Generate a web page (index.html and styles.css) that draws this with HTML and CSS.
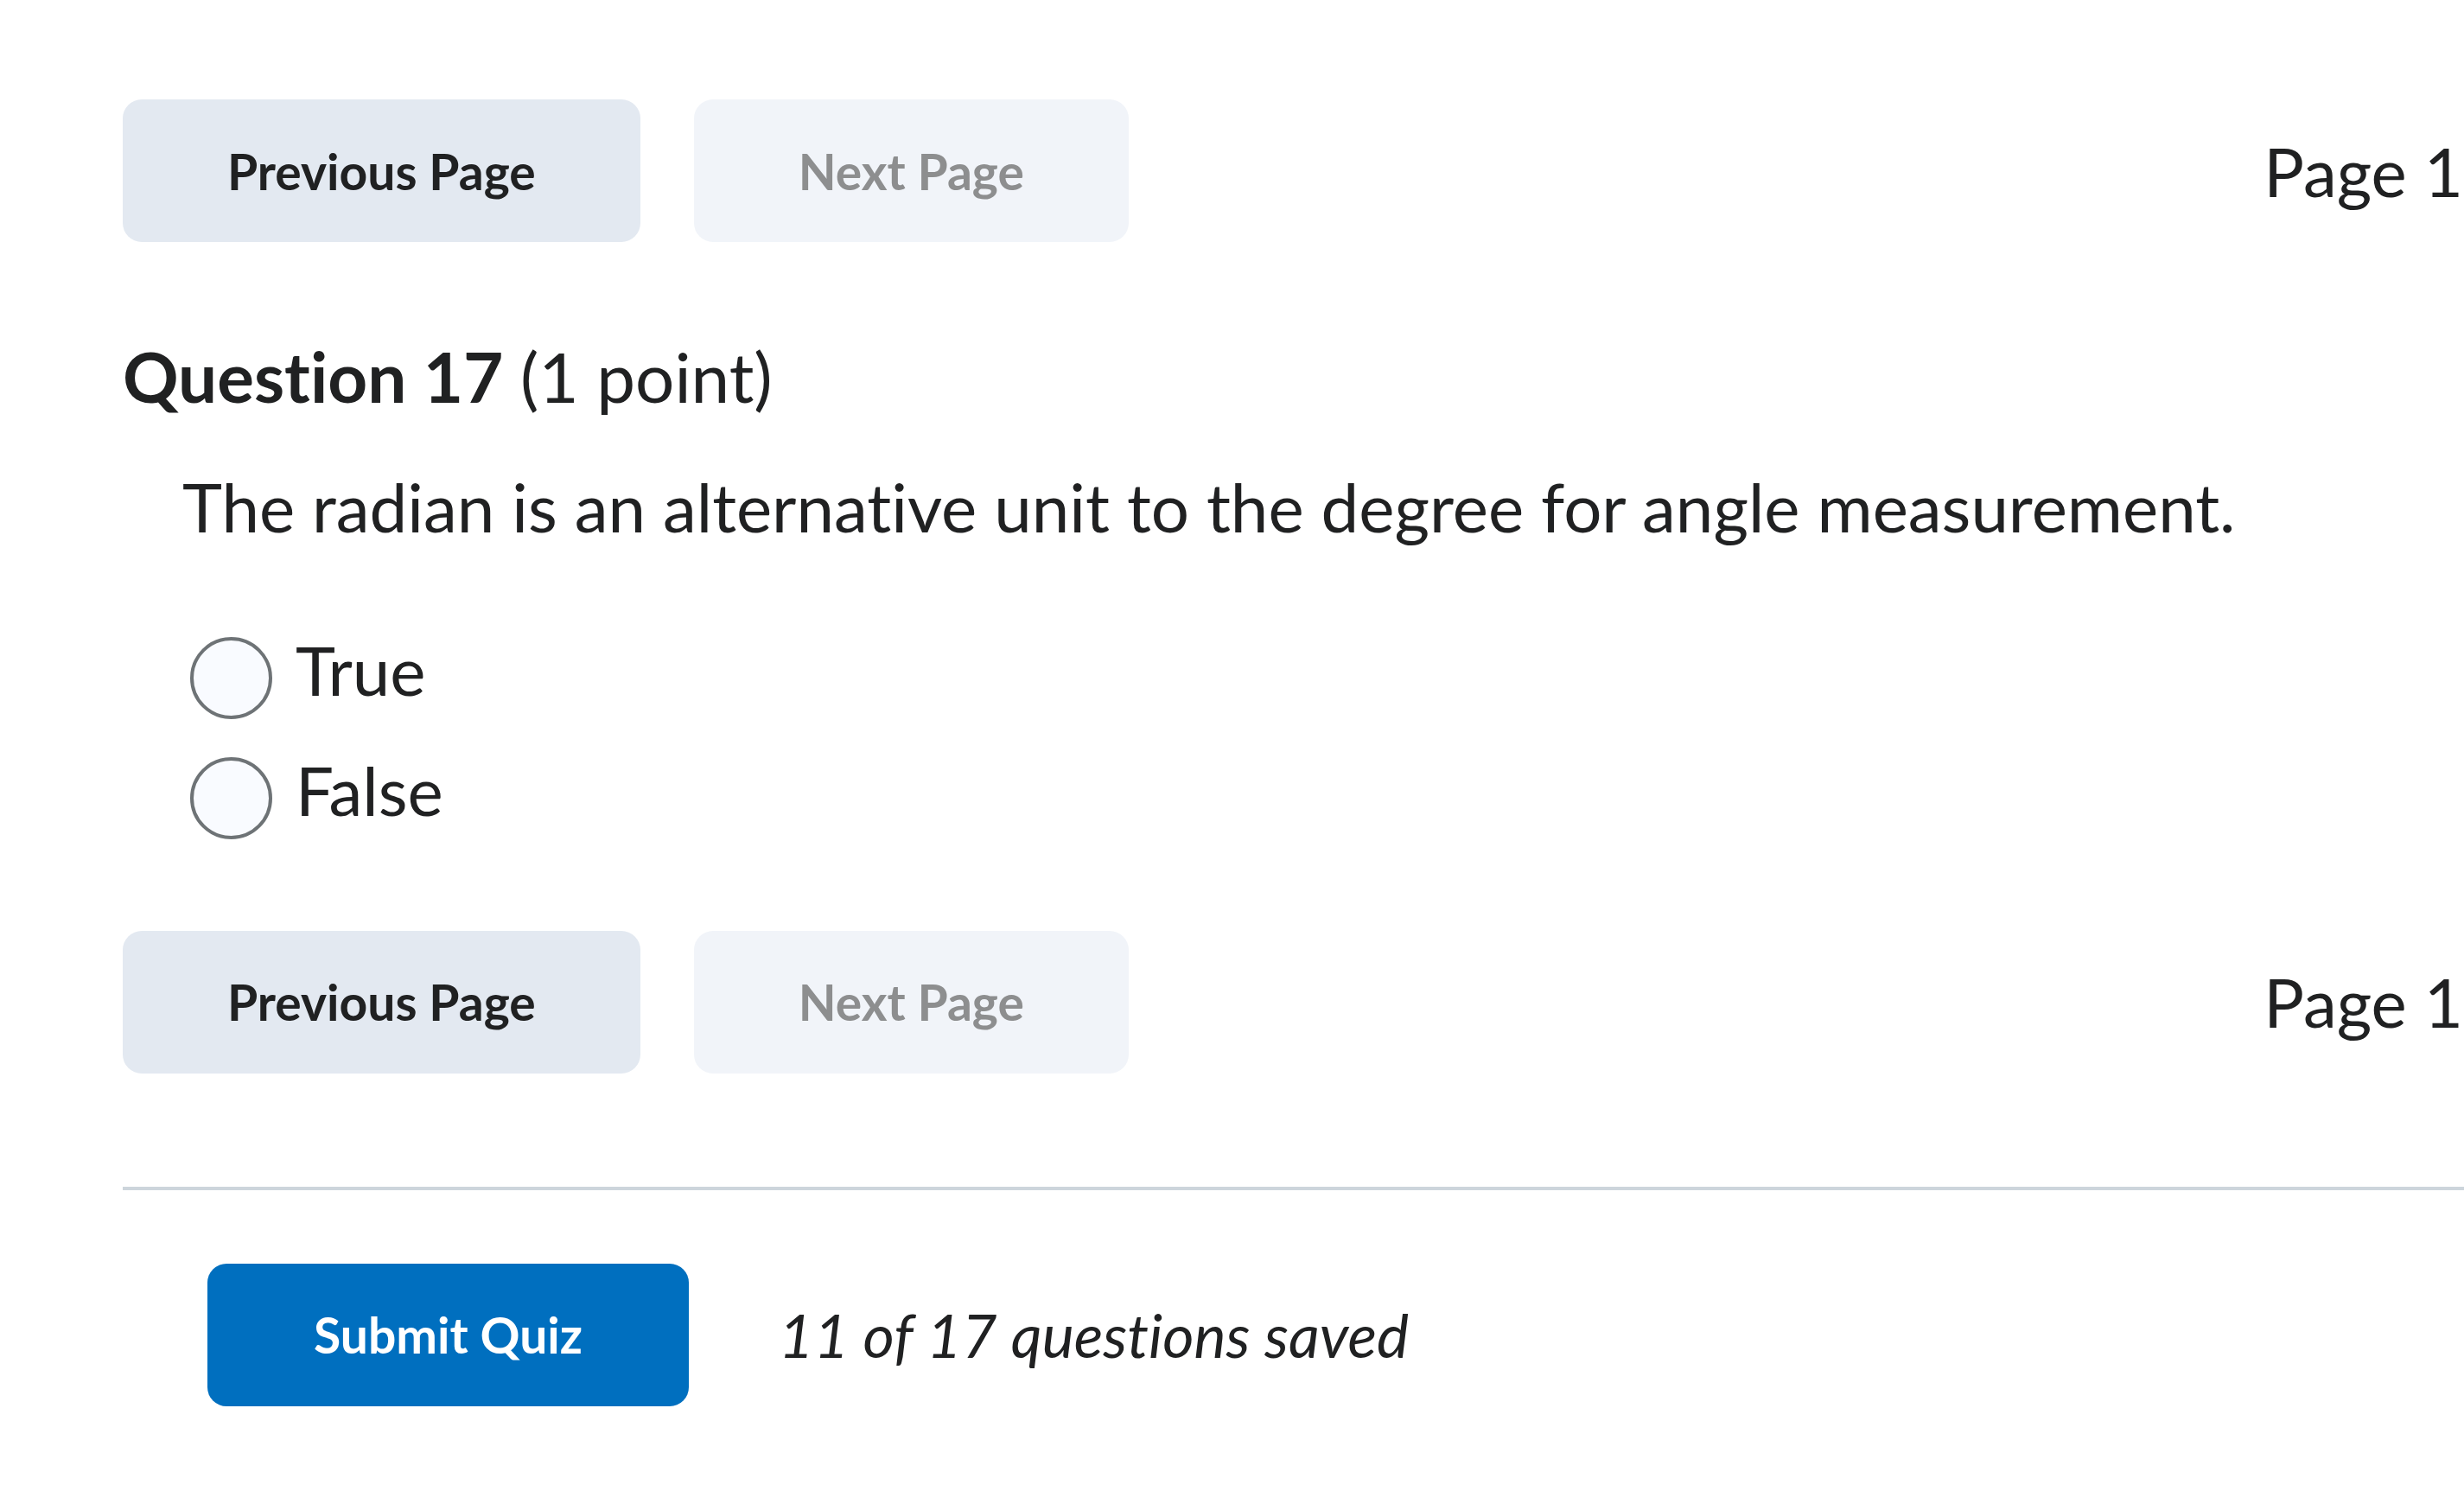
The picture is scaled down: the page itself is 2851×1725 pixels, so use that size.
FILE: index.html
```html
<!DOCTYPE html>
<html lang="en">
<head>
    <meta charset="UTF-8">
    <meta name="viewport" content="width=device-width, initial-scale=1.0">
    <title>Quiz - Question 17</title>
    <link rel="stylesheet" href="styles.css">
</head>
<body>
    <div class="quiz">
        <div class="pager">
            <button type="button" class="btn">Previous Page</button>
            <button type="button" class="btn" disabled>Next Page</button>
            <span class="page-count">Page 1</span>
        </div>

        <div class="question">
            <h2 class="question-title">Question 17 <span class="points">(1 point)</span></h2>
            <p class="question-text">The radian is an alternative unit to the degree for angle measurement.</p>

            <div class="choices">
                <label class="choice">
                    <input type="radio" name="q17" value="true">
                    <span>True</span>
                </label>
                <label class="choice">
                    <input type="radio" name="q17" value="false">
                    <span>False</span>
                </label>
            </div>
        </div>

        <div class="pager">
            <button type="button" class="btn">Previous Page</button>
            <button type="button" class="btn" disabled>Next Page</button>
            <span class="page-count">Page 1</span>
        </div>

        <div class="submit-bar">
            <button type="button" class="btn btn-primary">Submit Quiz</button>
            <span class="saved">11 of 17 questions saved</span>
        </div>
    </div>
</body>
</html>
```

FILE: styles.css
```css
html, body {
    overflow: hidden;
}

body {
    margin: 0;
    font-family: Lato, "Open Sans", sans-serif;
    font-variant-ligatures: none;
    color: #202122;
    background: #fff;
}

.quiz {
    padding: 115px 0 0 142px;
}

.pager {
    display: flex;
    align-items: center;
    gap: 62px;
}

.page-count {
    margin-left: auto;
    padding-right: 1px;
    font-size: 78px;
    white-space: nowrap;
}

.btn {
    height: 165px;
    padding: 0 121px;
    border: none;
    border-radius: 22px;
    background: #e3e9f1;
    color: #202122;
    font-family: inherit;
    font-variant-ligatures: none;
    font-size: 57px;
    font-weight: 700;
    cursor: pointer;
}

.btn:disabled {
    background: #f1f4f9;
    color: #8d8e8f;
    cursor: default;
}

.btn-primary {
    background: #006fbf;
    color: #fff;
    padding: 0 123px;
}

.question {
    padding: 107px 0 114px;
}

.question-title {
    margin: 0;
    font-size: 80px;
    font-weight: 700;
    line-height: 1.2;
}

.points {
    font-weight: 400;
}

.question-text {
    margin: 57px 0 0 69px;
    font-size: 78px;
    line-height: 1.2;
}

.choices {
    margin: 95px 0 0 78px;
    display: flex;
    flex-direction: column;
    gap: 44px;
}

.choice {
    display: flex;
    align-items: center;
    gap: 27px;
    font-size: 78px;
    line-height: 1.2;
}

.choice input {
    appearance: none;
    margin: 0;
    width: 95px;
    height: 95px;
    border: 4px solid #6e7376;
    border-radius: 50%;
    background: #f9fbff;
    box-sizing: border-box;
    position: relative;
    top: 8px;
}

.submit-bar {
    margin-top: 131px;
    border-top: 4px solid #cdd5dc;
    padding: 85px 0 0 98px;
    display: flex;
    align-items: center;
    gap: 104px;
}

.saved {
    font-size: 70px;
    font-style: italic;
}
```
